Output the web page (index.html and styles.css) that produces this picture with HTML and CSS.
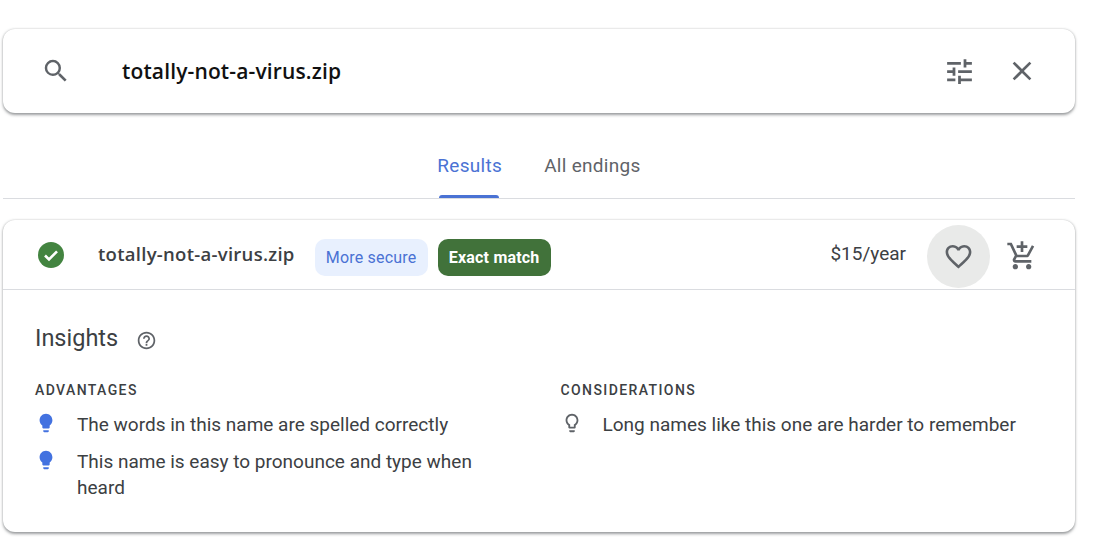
FILE: index.html
```html
<!DOCTYPE html>
<html lang="en">
<head>
<meta charset="utf-8">
<title>Domain search</title>
<link rel="stylesheet" href="styles.css">
</head>
<body>
<main class="page">
  <section class="search">
    <svg class="icon search-icon" viewBox="0 0 24 24"><path d="M15.5 14h-.79l-.28-.27A6.47 6.47 0 0 0 16 9.5 6.5 6.5 0 1 0 9.5 16c1.61 0 3.09-.59 4.23-1.57l.27.28v.79l5 4.99L20.49 19l-4.99-5zm-6 0C7.01 14 5 11.99 5 9.5S7.01 5 9.5 5 14 7.01 14 9.5 11.99 14 9.5 14z"/></svg>
    <div class="query">totally-not-a-virus.zip</div>
    <svg class="icon tune-icon" viewBox="0 0 24 24"><path d="M3 17v2h6v-2H3zM3 5v2h10V5H3zm10 16v-2h8v-2h-8v-2h-2v6h2zM7 9v2H3v2h4v2h2V9H7zm14 4v-2H11v2h10zm-6-4h2V7h4V5h-4V3h-2v6z"/></svg>
    <svg class="icon close-icon" viewBox="0 0 24 24"><path d="M19 6.41 17.59 5 12 10.59 6.41 5 5 6.41 10.59 12 5 17.59 6.41 19 12 13.41 17.59 19 19 17.59 13.41 12z"/></svg>
  </section>

  <nav class="tabs">
    <a class="tab tab-active">Results</a>
    <a class="tab">All endings</a>
  </nav>

  <section class="result">
    <header class="result-head">
      <svg class="check" viewBox="0 0 26 26"><circle cx="13" cy="13" r="13"/><path d="M7 13.5l4 4 8-8.2" /></svg>
      <div class="name">totally-not-a-virus.zip</div>
      <span class="chip chip-light">More secure</span>
      <span class="chip chip-dark">Exact match</span>
      <div class="price">$15/year</div>
      <div class="fav">
        <svg class="icon heart-icon" viewBox="0 0 24 24"><path d="M16.5 3c-1.74 0-3.41.81-4.5 2.09C10.91 3.81 9.24 3 7.5 3 4.42 3 2 5.42 2 8.5c0 3.78 3.4 6.86 8.55 11.54L12 21.35l1.45-1.32C18.6 15.36 22 12.28 22 8.5 22 5.42 19.58 3 16.5 3zm-4.4 15.55l-.1.1-.1-.1C7.14 14.24 4 11.39 4 8.5 4 6.5 5.5 5 7.5 5c1.54 0 3.04.99 3.57 2.36h1.87C13.46 5.99 14.96 5 16.5 5c2 0 3.5 1.5 3.5 3.5 0 2.89-3.14 5.74-7.9 10.05z"/></svg>
      </div>
      <svg class="icon cart-icon" viewBox="0 0 24 24"><path d="M11 9h2V6h3V4h-3V1h-2v3H8v2h3v3zm-4 9c-1.1 0-1.99.9-1.99 2S5.9 22 7 22s2-.9 2-2-.9-2-2-2zm10 0c-1.1 0-1.99.9-1.99 2s.89 2 1.99 2 2-.9 2-2-.9-2-2-2zm-9.83-3.25l.03-.12.9-1.63h7.45c.75 0 1.41-.41 1.75-1.03l3.86-7.01L19.42 4h-.01l-1.1 2-2.76 5H8.53l-.13-.27L6.16 6l-.95-2-.94-2H1v2h2l3.6 7.59-1.35 2.45c-.16.28-.25.61-.25.96 0 1.1.9 2 2 2h12v-2H7.42c-.13 0-.25-.11-.25-.25z"/></svg>
    </header>
    <div class="insights">
      <h2 class="insights-title">Insights
        <svg class="icon help-icon" viewBox="0 0 24 24"><path d="M11 18h2v-2h-2v2zm1-16C6.48 2 2 6.48 2 12s4.48 10 10 10 10-4.48 10-10S17.52 2 12 2zm0 18c-4.41 0-8-3.59-8-8s3.59-8 8-8 8 3.59 8 8-3.59 8-8 8zm0-14c-2.21 0-4 1.79-4 4h2c0-1.1.9-2 2-2s2 .9 2 2c0 2-3 1.75-3 5h2c0-2.25 3-2.5 3-5 0-2.21-1.79-4-4-4z"/></svg>
      </h2>
      <div class="columns">
        <div class="column">
          <h3 class="column-title">ADVANTAGES</h3>
          <ul class="list">
            <li class="item">
              <svg class="bulb bulb-on" viewBox="0 0 24 24"><path d="M9 21c0 .55.45 1 1 1h4c.55 0 1-.45 1-1v-1H9v1zm3-19C8.14 2 5 5.14 5 9c0 2.38 1.19 4.47 3 5.74V17c0 .55.45 1 1 1h6c.55 0 1-.45 1-1v-2.26c1.81-1.27 3-3.36 3-5.74 0-3.86-3.14-7-7-7z"/></svg>
              <span>The words in this name are spelled correctly</span>
            </li>
            <li class="item">
              <svg class="bulb bulb-on" viewBox="0 0 24 24"><path d="M9 21c0 .55.45 1 1 1h4c.55 0 1-.45 1-1v-1H9v1zm3-19C8.14 2 5 5.14 5 9c0 2.38 1.19 4.47 3 5.74V17c0 .55.45 1 1 1h6c.55 0 1-.45 1-1v-2.26c1.81-1.27 3-3.36 3-5.74 0-3.86-3.14-7-7-7z"/></svg>
              <span>This name is easy to pronounce and type when heard</span>
            </li>
          </ul>
        </div>
        <div class="column">
          <h3 class="column-title">CONSIDERATIONS</h3>
          <ul class="list">
            <li class="item">
              <svg class="bulb bulb-off" viewBox="0 0 24 24"><path d="M9 21c0 .55.45 1 1 1h4c.55 0 1-.45 1-1v-1H9v1zm3-19C8.14 2 5 5.14 5 9c0 2.38 1.19 4.47 3 5.74V17c0 .55.45 1 1 1h6c.55 0 1-.45 1-1v-2.26c1.81-1.27 3-3.36 3-5.74 0-3.86-3.14-7-7-7zm2.85 11.1l-.85.6V16h-4v-2.3l-.85-.6C7.8 12.16 7 10.63 7 9c0-2.76 2.24-5 5-5s5 2.24 5 5c0 1.63-.8 3.16-2.15 4.1z"/></svg>
              <span>Long names like this one are harder to remember</span>
            </li>
          </ul>
        </div>
      </div>
    </div>
  </section>
</main>
</body>
</html>
```

FILE: styles.css
```css
* { box-sizing: border-box; }
html, body { margin: 0; padding: 0; background: #fff; }
body {
  font-family: Roboto, "Liberation Sans", sans-serif;
  color: #3c4043;
  width: 1095px;
  height: 558px;
  overflow: hidden;
}
.page { width: 1072px; margin-left: 3px; padding-top: 29px; }
.icon { fill: #5f6368; display: block; flex: none; }

.search {
  height: 84px;
  display: flex;
  align-items: center;
  padding-left: 38px;
  padding-right: 38px;
  background: #fff;
  border-radius: 12px;
  box-shadow: 0 1.5px 3px rgba(60,64,67,.5), 0 0 2px rgba(60,64,67,.14);
}
.search-icon { width: 30px; height: 30px; }
.query {
  margin-left: 51px;
  flex: 1;
  font-family: "Open Sans", sans-serif;
  font-size: 21px;
  font-weight: 600;
  letter-spacing: .14px;
  color: #111;
}
.tune-icon { width: 33px; height: 33px; margin-right: 30px; }
.close-icon { width: 32px; height: 32px; margin-right: -1px; }

.tabs {
  margin-top: 30px;
  height: 56px;
  display: flex;
  justify-content: center;
  gap: 42px;
  border-bottom: 1px solid #dadce0;
}
.tab {
  position: relative;
  height: 55px;
  padding-top: 11px;
  font-size: 19px;
  line-height: 24px;
  letter-spacing: .3px;
  color: #5f6368;
}
.tab-active { color: #4a72d4; }
.tab-active::after {
  content: "";
  position: absolute;
  left: 2px;
  right: 3px;
  bottom: 0;
  height: 3px;
  background: #4a72d4;
  border-radius: 3px 3px 0 0;
}

.result {
  margin-top: 21px;
  height: 312px;
  background: #fff;
  border-radius: 12px;
  box-shadow: 0 1.5px 3px rgba(60,64,67,.5), 0 0 2px rgba(60,64,67,.14);
}
.result-head {
  height: 70px;
  display: flex;
  align-items: center;
  padding-left: 35px;
  padding-right: 37px;
  border-bottom: 1px solid #dadce0;
}
.check { width: 26px; height: 26px; flex: none; }
.check circle { fill: #438440; }
.check path { fill: none; stroke: #fff; stroke-width: 2.6; }
.name {
  margin-left: 34px;
  font-family: "Open Sans", sans-serif;
  font-size: 18.5px;
  font-weight: 600;
  letter-spacing: .28px;
  color: #3c4043;
  position: relative;
  top: -1px;
}
.chip {
  height: 37px;
  margin-top: 5px;
  border-radius: 10px;
  font-size: 16px;
  line-height: 37px;
  text-align: center;
}
.chip-light {
  margin-left: 20px;
  width: 113px;
  background: #e8f0fe;
  color: #4a72d4;
  letter-spacing: .2px;
}
.chip-dark {
  margin-left: 10px;
  width: 113px;
  background: #41723a;
  color: #fff;
  font-weight: 700;
  letter-spacing: .2px;
}
.price { margin-left: auto; font-size: 19px; color: #3c4043; position: relative; top: -1px; }
.fav {
  width: 63px;
  height: 63px;
  margin-left: 21px;
  margin-top: 4px;
  border-radius: 50%;
  background: #e9eae9;
  display: flex;
  align-items: center;
  justify-content: center;
}
.heart-icon { width: 31px; height: 31px; }
.cart-icon { width: 32px; height: 32px; margin-left: 16px; margin-top: 2px; }

.insights { padding: 31px 32px 0 32px; }
.insights-title {
  margin: 0;
  display: flex;
  align-items: center;
  gap: 18px;
  font-size: 23.5px;
  font-weight: 400;
  line-height: 34px;
  color: #3c4043;
}
.help-icon { width: 21px; height: 21px; margin-top: 4px; }
.columns { display: grid; grid-template-columns: 525.5px 1fr; margin-top: 26px; }
.column-title {
  margin: 0;
  font-size: 14px;
  font-weight: 500;
  line-height: 18px;
  letter-spacing: 1.4px;
  color: #3c4043;
}
.list { list-style: none; margin: 12.5px 0 0; padding: 0; }
.item {
  display: flex;
  gap: 20px;
  font-size: 19px;
  line-height: 26px;
  margin-bottom: 11px;
  width: 450px;
}
.column:last-child .item { width: auto; }
.bulb { width: 22px; height: 22px; flex: none; }
.bulb-on { fill: #4372e0; }
.bulb-off { fill: #5f6368; }
```
